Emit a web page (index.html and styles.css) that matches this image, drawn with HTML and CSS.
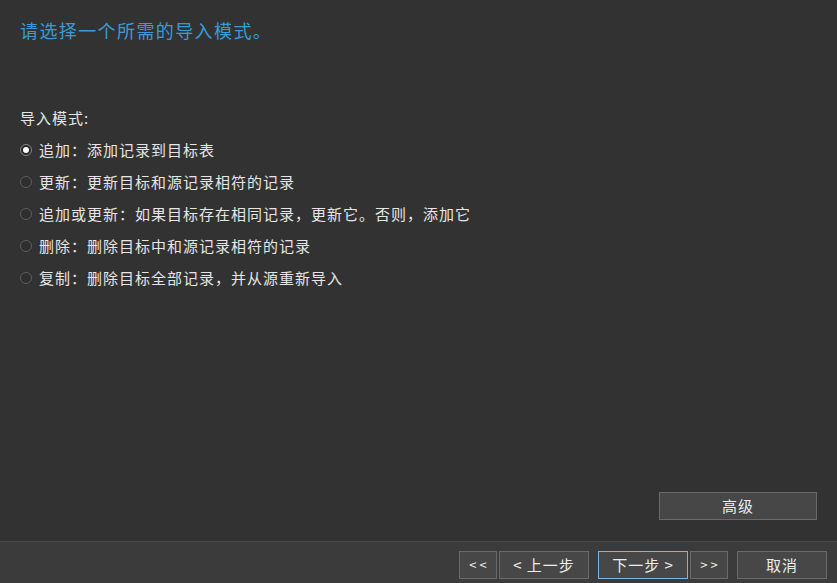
FILE: index.html
```html
<!DOCTYPE html>
<html lang="zh">
<head>
<meta charset="utf-8">
<link rel="stylesheet" href="styles.css">
</head>
<body>
<div class="window">
  <div class="content">
    <h1 class="title">请选择一个所需的导入模式。</h1>
    <div class="label">导入模式:</div>
    <ul class="options">
      <li class="option"><span class="radio checked"></span><span>追加：添加记录到目标表</span></li>
      <li class="option"><span class="radio"></span><span>更新：更新目标和源记录相符的记录</span></li>
      <li class="option"><span class="radio"></span><span>追加或更新：如果目标存在相同记录，更新它。否则，添加它</span></li>
      <li class="option"><span class="radio"></span><span>删除：删除目标中和源记录相符的记录</span></li>
      <li class="option"><span class="radio"></span><span>复制：删除目标全部记录，并从源重新导入</span></li>
    </ul>
    <div class="advanced-row">
      <button class="btn btn-adv">高级</button>
    </div>
  </div>
  <div class="footer">
    <div class="group">
      <button class="btn btn-small">&lt; &lt;</button>
      <button class="btn btn-wide">&lt; 上一步</button>
    </div>
    <div class="group">
      <button class="btn btn-wide btn-primary">下一步 &gt;</button>
      <button class="btn btn-small">&gt; &gt;</button>
    </div>
    <button class="btn btn-wide">取消</button>
  </div>
</div>
</body>
</html>
```

FILE: styles.css
```css
* { box-sizing: border-box; }
html, body {
  margin: 0;
  padding: 0;
  background: #323232;
}
body {
  font-family: "Noto Sans CJK SC", "Noto Sans", sans-serif;
  color: #e6e6e6;
}
.window {
  width: 837px;
  height: 583px;
  display: flex;
  flex-direction: column;
}
.content {
  flex: 1;
  display: flex;
  flex-direction: column;
  padding: 17px 20px 21px 20px;
}
.title {
  margin: 0;
  font-weight: normal;
  font-size: 18px;
  letter-spacing: 1.4px;
  line-height: 26px;
  color: #3a9ad8;
}
.label {
  margin-top: 64px;
  font-size: 15px;
  letter-spacing: 1px;
  line-height: 22px;
}
.options {
  list-style: none;
  margin: 10px 0 0 0;
  padding: 0;
  display: flex;
  flex-direction: column;
  gap: 10px;
}
.option {
  display: flex;
  align-items: center;
  gap: 7px;
  font-size: 15px;
  letter-spacing: 1px;
  line-height: 22px;
}
.radio {
  width: 12px;
  height: 12px;
  border-radius: 50%;
  border: 1px solid #5e5e5e;
  background: #2e2e2e;
  display: flex;
  align-items: center;
  justify-content: center;
}
.radio.checked {
  border-color: #8a8a8a;
  background: #262626;
}
.radio.checked::after {
  content: "";
  width: 6px;
  height: 6px;
  border-radius: 50%;
  background: #ffffff;
}
.advanced-row {
  margin-top: auto;
  display: flex;
  justify-content: flex-end;
}
.btn {
  height: 28px;
  background: #474747;
  border: 1px solid #6a6a6a;
  color: #ececec;
  font-family: "Noto Sans CJK SC", "Noto Sans", sans-serif;
  font-size: 15px;
  letter-spacing: 1px;
  padding: 0;
  margin: 0;
  line-height: 24px;
}
.btn-adv {
  width: 158px;
}
.footer {
  height: 42px;
  background: #3b3b3b;
  border-top: 1px solid #4a4a4a;
  display: flex;
  justify-content: flex-end;
  align-items: flex-start;
  padding: 9px 10px 0 0;
  gap: 9px;
}
.group {
  display: flex;
  gap: 2px;
}
.btn-small {
  width: 38px;
  font-size: 13px;
  letter-spacing: 0;
}
.btn-wide {
  width: 90px;
}
.btn-primary {
  border-color: #78b8e8;
}
```
